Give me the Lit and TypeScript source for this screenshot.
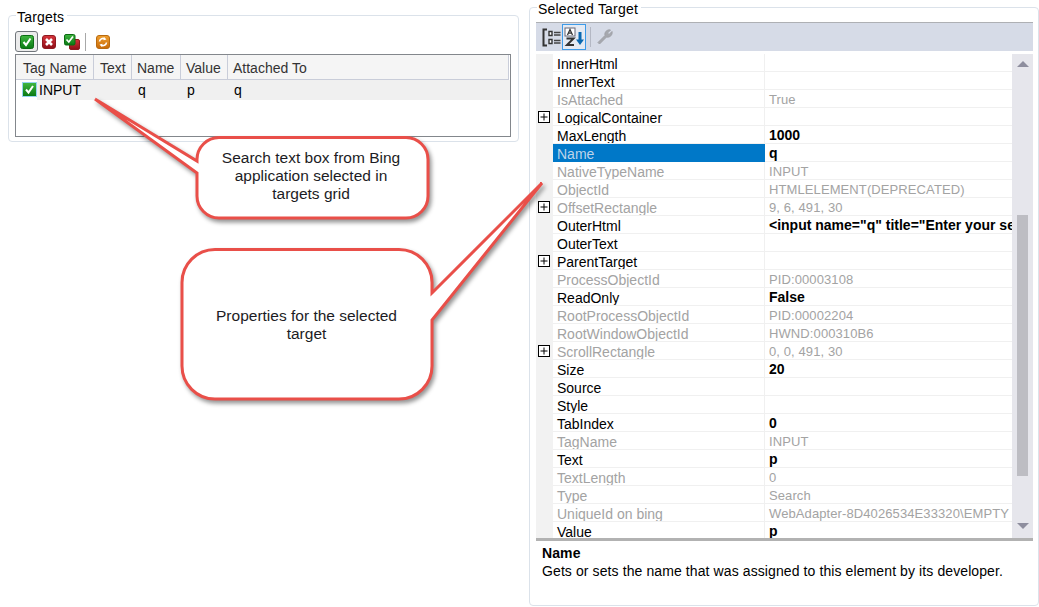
import { LitElement, html, css, svg } from "lit";
import { customElement } from "lit/decorators.js";

type Row = { n: string; v?: string; off?: boolean; exp?: boolean; sel?: boolean };

const rows: Row[] = [
  { n: "InnerHtml" },
  { n: "InnerText" },
  { n: "IsAttached", v: "True", off: true },
  { n: "LogicalContainer", exp: true },
  { n: "MaxLength", v: "1000" },
  { n: "Name", v: "q", sel: true },
  { n: "NativeTypeName", v: "INPUT", off: true },
  { n: "ObjectId", v: "HTMLELEMENT(DEPRECATED)", off: true },
  { n: "OffsetRectangle", v: "9, 6, 491, 30", off: true, exp: true },
  { n: "OuterHtml", v: '<input name="q" title="Enter your search term" type="search" value="p">' },
  { n: "OuterText" },
  { n: "ParentTarget", exp: true },
  { n: "ProcessObjectId", v: "PID:00003108", off: true },
  { n: "ReadOnly", v: "False" },
  { n: "RootProcessObjectId", v: "PID:00002204", off: true },
  { n: "RootWindowObjectId", v: "HWND:000310B6", off: true },
  { n: "ScrollRectangle", v: "0, 0, 491, 30", off: true, exp: true },
  { n: "Size", v: "20" },
  { n: "Source" },
  { n: "Style" },
  { n: "TabIndex", v: "0" },
  { n: "TagName", v: "INPUT", off: true },
  { n: "Text", v: "p" },
  { n: "TextLength", v: "0", off: true },
  { n: "Type", v: "Search", off: true },
  { n: "UniqueId on bing", v: "WebAdapter-8D4026534E33320\\EMPTY", off: true },
  { n: "Value", v: "p" },
];

const defs = svg`<defs>
  <linearGradient id="gG" x1="0" y1="0" x2="0" y2="1"><stop offset="0" stop-color="#3fb53f"/><stop offset="1" stop-color="#0a7a14"/></linearGradient>
  <linearGradient id="gR" x1="0" y1="0" x2="0" y2="1"><stop offset="0" stop-color="#d8343c"/><stop offset="1" stop-color="#8e0f18"/></linearGradient>
  <linearGradient id="gO" x1="0" y1="0" x2="0" y2="1"><stop offset="0" stop-color="#f0a030"/><stop offset="1" stop-color="#c86a08"/></linearGradient>
</defs>`;

const check = svg`<path d="M3.500 7 L6 10 L10.500 3.500" fill="none" stroke="#fff" stroke-width="2"/>`;

@customElement("app-root")
export class AppRoot extends LitElement {
  static styles = css`
    :host {
      display: block;
      width: 1039px;
      height: 607px;
      position: relative;
      overflow: hidden;
      background: #fff;
      font-family: "Liberation Sans", Arial, sans-serif;
      font-size: 14px;
      color: #000;
    }
    .page { display: flex; align-items: flex-start; padding: 7px 0 0 8px; box-sizing: border-box; height: 607px; }
    .group {
      position: relative;
      box-sizing: border-box;
      border: 1px solid #dbe2ea;
      border-radius: 4px;
    }
    .legend {
      position: absolute;
      background: #fff;
      padding: 0 3px 0 1px;
      line-height: 15px;
      letter-spacing: 0.2px;
    }
    .targets { width: 511px; height: 127px; margin-top: 8px; padding: 15px 7px 0 6px; }
    .targets .legend { left: 7px; top: -6px; }
    .selected { width: 510px; height: 599px; margin-left: 10px; padding: 14px 5px 0 6px; }
    .selected .legend { left: 7px; top: -6px; }

    .tbar { display: flex; align-items: center; height: 21px; margin-bottom: 2px; }
    .tbar svg { display: block; }
    .pressed {
      box-sizing: border-box; width: 23px; height: 21px;
      border: 1px solid #70757a; border-radius: 3px; background: #ebebeb;
      display: flex; align-items: center; justify-content: center;
      margin-right: 4px;
    }
    .tb-gap { margin-right: 8px; }
    .tb-sep { width: 1px; height: 18px; background: #a8a8a8; margin: 0 10px 0 5px; }

    .grid { box-sizing: border-box; height: 83px; border: 1px solid #83878c; background: #fff; }
    .ghead { display: flex; height: 25px; box-sizing: border-box; background: #f5f5f5; border-bottom: 1px solid #c9cdd9; margin-right: 1px; border-right: 1px solid #c9cdd9; }
    .ghead div { box-sizing: border-box; border-right: 1px solid #c9cdd9; padding: 0 0 0 7px; line-height: 27px; color: #333; }
    .ghead div:last-child { border-right: 0; flex: 1; padding-left: 5px; }
    .grow { display: flex; height: 20px; line-height: 21px; }
    .grow .ic { width: 21px; padding: 2px 0 0 6px; box-sizing: border-box; }
    .grow .cells { flex: 1; display: flex; background: #f0f0f0; }
    .grow .cells div { box-sizing: border-box; padding-left: 6px; }

    .ptbar {
      box-sizing: border-box; height: 29px; background: #d6dbe7;
      border-top: 1px solid #aeb0b4;
      display: flex; align-items: center; padding-left: 5px;
      margin-bottom: 3px;
    }
    .ptbtn { width: 21px; height: 26px; box-sizing: border-box; display: flex; align-items: center; justify-content: center; }
    .ptbtn.on { width: 24px; border: 1px solid #3d9be8; background: #e4eaf3; }
    .ptsep { width: 1px; height: 20px; background: #b4b8c4; margin: 0 3px 0 4px; }

    .pgrid { display: flex; height: 484px; }
    .gutter-rows { flex: 1; overflow: hidden; min-width: 0; }
    .prow { display: flex; height: 18px; box-sizing: border-box; line-height: 20px; }
    .gut { width: 17px; flex: none; background: #f2f2f2; display: flex; align-items: center; padding-left: 2px; box-sizing: border-box; }
    .expbox { width: 12px; height: 12px; display: block; }
    .pname { width: 212px; flex: none; box-sizing: border-box; padding-left: 4px; border-bottom: 1px solid #f0f0f0; border-right: 1px solid #f0f0f0; white-space: nowrap; overflow: hidden; }
    .pval { flex: 1; min-width: 0; box-sizing: border-box; padding-left: 4px; border-bottom: 1px solid #f0f0f0; font-weight: bold; white-space: nowrap; overflow: hidden; line-height: 19px; }
    .off .pname { color: #a3a3a3; }
    .off .pval { color: #a3a3a3; font-weight: normal; font-size: 13px; letter-spacing: 0.1px; }
    .sel .pname { background: #0078c8; color: #bcd4ea; border-color: #0078c8; }

    .sbar { width: 21px; flex: none; background: #e6e6ec; display: flex; flex-direction: column; align-items: center; }
    .arrow { width: 0; height: 0; border-left: 6px solid transparent; border-right: 6px solid transparent; }
    .arrow.up { border-bottom: 6px solid #8e8e9e; margin-top: 7px; }
    .thumb { width: 11px; height: 261px; background: #bdbdc3; margin-top: 148px; }
    .arrow.down { border-top: 6px solid #8e8e9e; margin-top: 47px; }

    .hsplit { height: 3px; background: #b2b2b2; }
    .help { padding: 3px 0 0 6px; line-height: 18px; letter-spacing: 0.1px; }
    .help b { display: block; }

    .over { position: absolute; left: 0; top: 0; width: 1039px; height: 607px; pointer-events: none; }
    .balloon { fill: #fff; stroke: #e94f49; stroke-width: 3; stroke-linejoin: miter; filter: drop-shadow(2px 3px 2px rgba(0,0,0,.42)); }
    .lbl { font-family: "Liberation Sans", Arial, sans-serif; font-size: 15.5px; fill: #1c1c24; text-anchor: middle; }
  `;

  private row(r: Row) {
    return html`<div class="prow ${r.off ? "off" : ""} ${r.sel ? "sel" : ""}">
      <div class="gut">
        ${r.exp
          ? html`<svg class="expbox" viewBox="0 0 12 12"><rect x=".5" y=".5" width="11" height="11" fill="#fff" stroke="#000"/><path d="M2.500 6H9.500M6 2.500V9.500" stroke="#000"/></svg>`
          : ""}
      </div>
      <div class="pname">${r.n}</div>
      <div class="pval">${r.v ?? ""}</div>
    </div>`;
  }

  render() {
    return html`
      <svg width="0" height="0" style="position:absolute">${defs}</svg>
      <div class="page">
        <div class="group targets">
          <div class="legend">Targets</div>
          <div class="tbar">
            <div class="pressed">
              <svg width="14" height="14" viewBox="0 0 14 14"><rect x=".5" y=".5" width="13" height="13" rx="2" fill="url(#gG)" stroke="#0b6b12"/>${check}</svg>
            </div>
            <svg class="tb-gap" width="14" height="14" viewBox="0 0 14 14"><rect x=".5" y=".5" width="13" height="13" rx="2.500" fill="url(#gR)" stroke="#8e1a20"/><path d="M4 4L10 10M10 4L4 10" stroke="#fff" stroke-width="2.600"/></svg>
            <svg width="16" height="16" viewBox="0 0 16 16"><rect x="5.500" y="5.500" width="10" height="10" rx="1.500" fill="url(#gR)" stroke="#8e1a20"/><rect x=".5" y=".5" width="10.500" height="10.500" rx="1.500" fill="url(#gG)" stroke="#0b6b12"/><path d="M2.500 5.500L4.800 8L9 2.500" fill="none" stroke="#fff" stroke-width="1.700"/></svg>
            <div class="tb-sep"></div>
            <svg width="14" height="14" viewBox="0 0 14 14"><rect x=".5" y=".5" width="13" height="13" rx="2.500" fill="url(#gO)" stroke="#b86a10"/><path d="M3.500 6.500A3.500 3.500 0 0 1 9 4M10.500 7.500A3.500 3.500 0 0 1 5 10" fill="none" stroke="#fff" stroke-width="1.600"/><path d="M8 2L10.500 4.500L7.500 5.200ZM6 12L3.500 9.500L6.500 8.800Z" fill="#fff"/></svg>
          </div>
          <div class="grid">
            <div class="ghead">
              <div style="width:78px">Tag Name</div>
              <div style="width:38px;padding-left:6px">Text</div>
              <div style="width:49px;padding-left:5px">Name</div>
              <div style="width:47px;padding-left:5px">Value</div>
              <div>Attached To</div>
            </div>
            <div class="grow">
              <div class="ic">
                <svg width="15" height="15" viewBox="0 0 15 15" style="display:block"><rect x="1" y="1" width="13" height="13" fill="url(#gG)"/><rect x=".5" y=".5" width="14" height="14" fill="none" stroke="#2aa7e0" stroke-dasharray="1 1"/><path d="M4 7.500L6.500 10.500L11 4" fill="none" stroke="#fff" stroke-width="2"/></svg>
              </div>
              <div class="cells">
                <div style="width:95px;padding-left:2px">INPUT</div>
                <div style="width:49px">q</div>
                <div style="width:47px">p</div>
                <div>q</div>
              </div>
            </div>
          </div>
        </div>

        <div class="group selected">
          <div class="legend">Selected Target</div>
          <div class="ptbar">
            <div class="ptbtn">
              <svg width="19" height="19" viewBox="0 0 19 19"><path d="M5 1.500H1.500V17.500H5" fill="none" stroke="#333" stroke-width="2"/><path d="M7 3.500H10V7.500H7ZM7 11.500H10V15.500H7Z" fill="#fff" stroke="#333" stroke-width="1.400"/><path d="M12 4.500H18.500M12 7H18.500M12 12.500H18.500M12 15H18.500" stroke="#444" stroke-width="1.600"/></svg>
            </div>
            <div class="ptbtn on">
              <svg width="21" height="20" viewBox="0 0 21 20"><rect x="1" y="1" width="10" height="8" fill="#fff" stroke="#667"/><path d="M3.500 8L6 2.500L8.500 8M4.300 6.200H7.700" fill="none" stroke="#333" stroke-width="1.300"/><path d="M2.500 11.500H9.500L3 18H10" fill="none" stroke="#333" stroke-width="2"/><path d="M16 5V15" stroke="#0a68b0" stroke-width="3"/><path d="M12 12.500H20L16 18Z" fill="#0a68b0"/></svg>
            </div>
            <div class="ptsep"></div>
            <div class="ptbtn">
              <svg width="18" height="18" viewBox="0 0 18 18"><path d="M2 14.500L9 7.500A4.500 4.500 0 0 1 14.500 2L11.500 5L13 6.500L16 3.500A4.500 4.500 0 0 1 10.500 9L3.500 16Z" fill="#a6a8ae" stroke="#a0a2a8"/></svg>
            </div>
          </div>
          <div class="pgrid">
            <div class="gutter-rows">${rows.map((r) => this.row(r))}</div>
            <div class="sbar">
              <div class="arrow up"></div>
              <div class="thumb"></div>
              <div class="arrow down"></div>
            </div>
          </div>
          <div class="hsplit"></div>
          <div class="help"><b>Name</b>Gets or sets the name that was assigned to this element by its developer.</div>
        </div>
      </div>

      <svg class="over" viewBox="0 0 1039 607">
        <path class="balloon" d="M219 137.500H406A22 22 0 0 1 428 159.500V196A22 22 0 0 1 406 218H219A22 22 0 0 1 197 196V173L95 99L197 161V159.500A22 22 0 0 1 219 137.500Z"/>
        <text class="lbl" x="311" y="163">Search text box from Bing</text>
        <text class="lbl" x="311" y="181">application selected in</text>
        <text class="lbl" x="311" y="199">targets grid</text>
        <path class="balloon" d="M215 249.500H399A33 33 0 0 1 432 282.500V293L542 183L432 320V366A33 33 0 0 1 399 399H215A33 33 0 0 1 182 366V282.500A33 33 0 0 1 215 249.500Z"/>
        <text class="lbl" x="306.500" y="321">Properties for the selected</text>
        <text class="lbl" x="306.500" y="339">target</text>
      </svg>
    `;
  }
}
